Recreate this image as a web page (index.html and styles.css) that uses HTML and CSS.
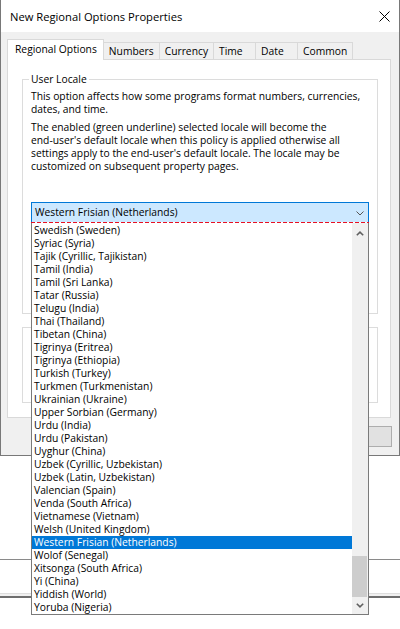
FILE: index.html
```html
<!DOCTYPE html>
<html>
<head>
<meta charset="utf-8">
<title>New Regional Options Properties</title>
<link rel="stylesheet" href="styles.css">
</head>
<body>
<div class="window">
  <div class="titlebar">
    <span class="title">New Regional Options Properties</span>
    <svg class="close" width="11" height="11" viewBox="0 0 11 11"><path d="M0.5 0.5L10.5 10.5M10.5 0.5L0.5 10.5" stroke="#000" stroke-width="1" fill="none"/></svg>
  </div>
  <div class="client">
    <div class="tabs">
      <div class="tab active">Regional Options</div>
      <div class="tab">Numbers</div>
      <div class="tab">Currency</div>
      <div class="tab">Time</div>
      <div class="tab">Date</div>
      <div class="tab">Common</div>
    </div>
    <div class="panel">
      <fieldset class="group group-locale">
        <legend>User Locale</legend>
        <p>This option affects how some programs format numbers, currencies,<br>dates, and time.</p>
        <p>The enabled (green underline) selected locale will become the<br>end-user's default locale when this policy is applied otherwise all<br>settings apply to the end-user's default locale. The locale may be<br>customized on subsequent property pages.</p>
        <div class="combo-wrap">
          <div class="combo">
            <span>Western Frisian (Netherlands)</span>
            <svg class="chev" width="8" height="5" viewBox="0 0 8 5"><path d="M0.5 0.5L4 4L7.5 0.5" stroke="#555" stroke-width="1" fill="none"/></svg>
          </div>
          <div class="dropdown">
            <div class="rows">
              <div class="row">Swedish (Sweden)</div>
              <div class="row">Syriac (Syria)</div>
              <div class="row">Tajik (Cyrillic, Tajikistan)</div>
              <div class="row">Tamil (India)</div>
              <div class="row">Tamil (Sri Lanka)</div>
              <div class="row">Tatar (Russia)</div>
              <div class="row">Telugu (India)</div>
              <div class="row">Thai (Thailand)</div>
              <div class="row">Tibetan (China)</div>
              <div class="row">Tigrinya (Eritrea)</div>
              <div class="row">Tigrinya (Ethiopia)</div>
              <div class="row">Turkish (Turkey)</div>
              <div class="row">Turkmen (Turkmenistan)</div>
              <div class="row">Ukrainian (Ukraine)</div>
              <div class="row">Upper Sorbian (Germany)</div>
              <div class="row">Urdu (India)</div>
              <div class="row">Urdu (Pakistan)</div>
              <div class="row">Uyghur (China)</div>
              <div class="row">Uzbek (Cyrillic, Uzbekistan)</div>
              <div class="row">Uzbek (Latin, Uzbekistan)</div>
              <div class="row">Valencian (Spain)</div>
              <div class="row">Venda (South Africa)</div>
              <div class="row">Vietnamese (Vietnam)</div>
              <div class="row">Welsh (United Kingdom)</div>
              <div class="row selected">Western Frisian (Netherlands)</div>
              <div class="row">Wolof (Senegal)</div>
              <div class="row">Xitsonga (South Africa)</div>
              <div class="row">Yi (China)</div>
              <div class="row">Yiddish (World)</div>
              <div class="row">Yoruba (Nigeria)</div>
            </div>
            <div class="scrollbar">
              <div class="sb-btn sb-up"><svg width="8" height="5" viewBox="0 0 8 5"><path d="M0.8 4.3L4 1.2L7.2 4.3" stroke="#606060" stroke-width="1.6" fill="none"/></svg></div>
              <div class="sb-track"><div class="thumb"></div></div>
              <div class="sb-btn sb-down"><svg width="8" height="5" viewBox="0 0 8 5"><path d="M0.8 0.7L4 3.8L7.2 0.7" stroke="#606060" stroke-width="1.6" fill="none"/></svg></div>
            </div>
          </div>
        </div>
      </fieldset>
      <div class="group group-second"></div>
    </div>
    <div class="buttons">
      <button class="btn">OK</button>
      <button class="btn">Cancel</button>
      <button class="btn">Apply</button>
    </div>
  </div>
</div>
<div class="desk">
  <div class="desk-line"></div>
  <div class="desk-bar"></div>
</div>
</body>
</html>
```
FILE: styles.css
```css
* { box-sizing: border-box; }

body {
  margin: 0;
  background: #fff;
  font-family: "Open Sans", "Segoe UI", sans-serif;
  font-size: 10.3px;
  line-height: 13px;
  color: #000;
}

.window {
  width: 400px;
  height: 456px;
  border: 1px solid #787878;
  border-top: 0;
  background: #f0f0f0;
  display: flex;
  flex-direction: column;
}

.titlebar {
  height: 32px;
  flex: none;
  background: #fff;
  display: flex;
  align-items: center;
  justify-content: space-between;
  padding: 0 9px 0 9px;
}

.title {
  font-size: 11.2px;
  line-height: 15px;
  margin-top: 1px;
}

.close { display: block; margin-top: 1px; }

.client {
  flex: 1;
  padding: 7px 0 0 6px;
}

.tabs {
  display: flex;
  align-items: flex-end;
  height: 20px;
  position: relative;
  z-index: 1;
}

.tab {
  height: 17px;
  min-width: 42px;
  padding: 2px 5px 0 5px;
  border-top: 1px solid #d9d9d9;
  border-right: 1px solid #d9d9d9;
  white-space: nowrap;
}

.tab.active {
  height: 21px;
  margin-bottom: -1px;
  padding: 3px 6px 0 7px;
  background: #fff;
  border-left: 1px solid #d9d9d9;
}

.panel {
  width: 384px;
  height: 359px;
  background: #fff;
  border: 1px solid #d9d9d9;
  padding: 0 0 0 14px;
}

.group {
  width: 356px;
  border: 1px solid #dcdcdc;
  margin: 0;
  min-width: 0;
}

.group-locale {
  height: 241px;
  margin-top: 13px;
  padding: 4px 8px 0 8px;
}

.group-locale legend {
  padding: 0 2px;
  margin-left: -2px;
  line-height: 13px;
}

.group-second {
  height: 76px;
  margin-top: 13px;
}

p { margin: 0; }
p + p { margin-top: 5px; }

.combo-wrap {
  position: relative;
  z-index: 5;
  margin-top: 29px;
}

.combo {
  position: relative;
  height: 21px;
  border: 1px solid #0078d7;
  background: #cce8ff;
  padding: 3px 4px 0 3px;
  display: flex;
  justify-content: space-between;
  align-items: flex-start;
}

.combo::after {
  content: "";
  position: absolute;
  left: -1px;
  right: -1px;
  bottom: -1px;
  height: 1px;
  background: repeating-linear-gradient(to right, #e81123 0 4px, #fff 4px 6px);
}

.chev { display: block; margin-top: 5px; }

.dropdown {
  position: absolute;
  top: 100%;
  left: 0;
  right: 0;
  height: 392px;
  background: #fff;
  border: 1px solid #7a7a7a;
  border-top: 0;
  display: flex;
}

.rows {
  flex: 1;
  padding-top: 1px;
}

.row {
  height: 13px;
  padding-left: 2px;
  white-space: nowrap;
}

.row.selected {
  background: #0078d7;
  color: #fff;
}

.scrollbar {
  width: 16px;
  background: #f0f0f0;
  display: flex;
  flex-direction: column;
}

.sb-btn {
  height: 17px;
  flex: none;
  display: flex;
  justify-content: center;
}

.sb-btn svg { display: block; }
.sb-up { align-items: flex-end; padding-bottom: 4px; }
.sb-down { align-items: flex-start; padding-top: 6px; }

.sb-track {
  flex: 1;
  display: flex;
  flex-direction: column;
  justify-content: flex-end;
}

.thumb {
  height: 41px;
  margin-right: 1px;
  background: #cdcdcd;
}

.buttons {
  display: flex;
  justify-content: flex-end;
  gap: 6px;
  margin-top: 8px;
  padding-right: 7px;
}

.btn {
  width: 75px;
  height: 21px;
  margin: 0;
  padding: 0;
  background: #e1e1e1;
  border: 1px solid #adadad;
  font: inherit;
  color: #000;
}

.desk {
  padding-bottom: 31px;
}

.desk-line {
  margin-top: 103px;
  height: 1px;
  background: #8a8a8a;
}

.desk-bar {
  margin-top: 33px;
  height: 5px;
  border-top: 1px solid #dedede;
  border-bottom: 2px solid #6e6e6e;
  background: #f0f0f0;
}
```
